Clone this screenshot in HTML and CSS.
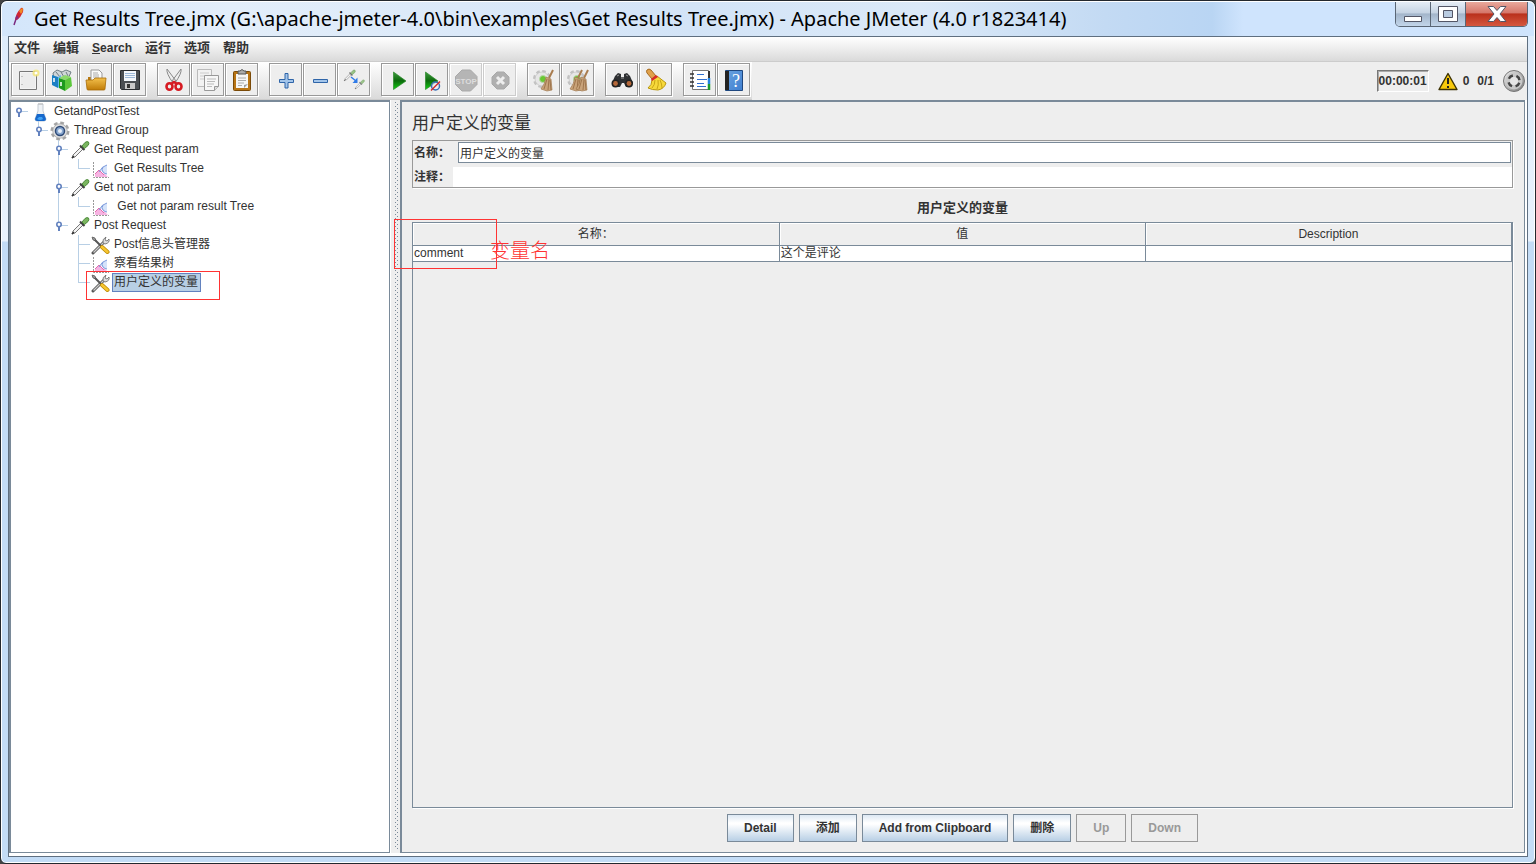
FILE: index.html
```html
<!DOCTYPE html>
<html lang="zh-CN">
<head>
	<meta charset="utf-8">
	<title>Apache JMeter (4.0 r1823414)</title>
	<link rel="stylesheet" href="styles.css">
</head>
<body>
<svg class="defs" aria-hidden="true">
	<defs>
		<linearGradient id="green" x1="0" y1="0" x2="0" y2="1"><stop offset="0" stop-color="#3f9a3f"/><stop offset=".5" stop-color="#0b6a0b"/><stop offset="1" stop-color="#12d012"/></linearGradient>
		<linearGradient id="gold" x1="0" y1="0" x2="0" y2="1"><stop offset="0" stop-color="#f3c04c"/><stop offset="1" stop-color="#c07c08"/></linearGradient>
		<linearGradient id="metal" x1="0" y1="0" x2="1" y2="1"><stop offset="0" stop-color="#f2f2f2"/><stop offset="1" stop-color="#777"/></linearGradient>
		<linearGradient id="book" x1="0" y1="0" x2="1" y2="1"><stop offset="0" stop-color="#6aa3e0"/><stop offset="1" stop-color="#3f7fd0"/></linearGradient>
	</defs>
	<symbol id="dropper" viewBox="0 0 20 20">
		<path d="M2 18l1-3 8-8 2 2-8 8z" fill="#f2f2f2" stroke="#777"/>
		<path d="M2 18l2-2" stroke="#333" stroke-width="1.500"/>
		<path d="M10 5.500l4.500 4.500" stroke="#444" stroke-width="2"/>
		<path d="M12 6l3-3.500q2-1.500 3.500-.5 1 2-.5 3.500l-3.500 3z" fill="#7ab55f" stroke="#4c8a3a"/>
	</symbol>
	<symbol id="chart" viewBox="0 0 20 20">
		<path d="M3.500 3v15.500H19" fill="none" stroke="#999" stroke-dasharray="2 1"/>
		<path d="M5 18v-3l4-4 3 3 3 1 3 3z" fill="#f7b3e2"/>
		<path d="M5 15l4-4 3 3 2 2" fill="none" stroke="#df6cae"/>
		<path d="M11 11q2-4 6-5v9q-4 0-6-4z" fill="#d5e3fa"/>
		<path d="M9 13q3-6 8-7M13 8q-2 3 0 5t4 2" fill="none" stroke="#7d9bdc"/>
	</symbol>
	<symbol id="tools" viewBox="0 0 20 20">
		<path d="M3 18L14 7" stroke="#555" stroke-width="3" stroke-linecap="round"/>
		<path d="M3.500 17.500L14 7" stroke="#ccc" stroke-width="1.200"/>
		<path d="M13 8q-1-4 3-6l-1 3 2 1 2-2q1 4-4 5z" fill="#ddd" stroke="#666" stroke-width=".8"/>
		<path d="M3 3l8 8" stroke="#555" stroke-width="2"/>
		<path d="M2 2l3 1 1 3-3-1z" fill="#999" stroke="#444" stroke-width=".6"/>
		<path d="M12 12l5.500 5" stroke="#b88600" stroke-width="4" stroke-linecap="round"/>
		<path d="M12 12l5.500 5" stroke="#f7c630" stroke-width="2.500" stroke-linecap="round"/>
	</symbol>
	<symbol id="flask" viewBox="0 0 20 20">
		<path d="M8 2v7l-3 8q0 2 2 2h7q2 0 2-2l-3-8V2z" fill="#eef2f6" stroke="#c2cad3"/>
		<path d="M7 12h7l2 5q0 2-2 2H7q-2 0-2-2z" fill="#1668cc"/>
		<path d="M7 17q3 2 6 0l-1-2H9z" fill="#3fa2f5"/>
		<path d="M8 2h5" stroke="#bbb"/>
	</symbol>
	<symbol id="gear" viewBox="0 0 20 20">
		<circle cx="10" cy="10" r="8" fill="none" stroke="#a5a5a5" stroke-width="3" stroke-dasharray="3.600 2.683"/>
		<circle cx="10" cy="10" r="7.300" fill="#ddd" stroke="#999" stroke-width=".6"/>
		<circle cx="10" cy="10" r="4.500" fill="#88a7cf" stroke="#2e4a77" stroke-width="1.500"/>
		<circle cx="10" cy="10" r="2" fill="#e9f0fa"/>
	</symbol>
	<symbol id="open" viewBox="0 0 19 19">
		<path d="M8 9.500h9" stroke="#b8cfe5"/>
		<path d="M8 9v6" stroke="#6382bf" stroke-width="2"/>
		<circle cx="8" cy="8.500" r="2.200" fill="#fff" stroke="#6382bf" stroke-width="1.600"/>
	</symbol>
	<symbol id="broom" viewBox="0 0 24 24">
		<path d="M21 2l-4 8" stroke="#a97c4e" stroke-width="2"/>
		<path d="M14 9l5 2 1 11-5 1-6-2q4-5 5-12z" fill="#c9a37a" stroke="#a17a52" stroke-width=".7"/>
		<path d="M15 11l-3 10M17 11l-1 11M18 12l1 10" stroke="#8c6239" stroke-width=".7"/>
	</symbol>
	<symbol id="cog" viewBox="0 0 24 24">
		<circle cx="10" cy="11" r="7.500" fill="none" stroke="#c2c2c2" stroke-width="3" stroke-dasharray="3.500 2.390"/>
		<circle cx="10" cy="11" r="7" fill="#e6e6e6" stroke="#bdbdbd" stroke-width=".6"/>
		<circle cx="11" cy="11" r="3.500" fill="#68c832" stroke="#b9d6aa"/>
	</symbol>
</svg>

<div class="window">
	<header class="titlebar">
		<svg class="feather" viewBox="0 0 14 20"><path d="M2 18l2-6" stroke="#7a2a80" stroke-width="1.500"/><path d="M3 13Q4 6 9 1q3-1 2 4-2 5-6 8z" fill="#d22630"/><path d="M7 4q2-3 4-3 0 4-2 6z" fill="#f08a25"/><path d="M3 13q0-3 2-5l2 3q-2 2-4 2z" fill="#8e2a78"/></svg>
		<h1>Get Results Tree.jmx (G:\apache-jmeter-4.0\bin\examples\Get Results Tree.jmx) - Apache JMeter (4.0 r1823414)</h1>
		<div class="winbtns">
			<button class="min" aria-label="Minimize"><svg viewBox="0 0 18 6"><path d="M.5.5h17v5H.5z" fill="#fff" stroke="#535666"/></svg></button>
			<button class="max" aria-label="Maximize"><svg viewBox="0 0 20 16"><path d="M.5.5h19v15H.5z" fill="#fff" stroke="#535666"/><path d="M5.500 4.500h9v7h-9z" fill="#b9cbe0" stroke="#535666"/></svg></button>
			<button class="close" aria-label="Close"><svg viewBox="0 0 20 16"><path d="M1 .5h5.500L10 4.500l3.500-4H19L13 8l6 7.500h-5.500L10 11.500l-3.500 4H1L7 8z" fill="#fff" stroke="#535666"/></svg></button>
		</div>
	</header>

	<div class="client">
		<nav class="menubar">
			<button>文件</button>
			<button>编辑</button>
			<button class="latin"><u>S</u>earch</button>
			<button>运行</button>
			<button>选项</button>
			<button>帮助</button>
		</nav>

		<div class="toolbar">
			<div class="tools">
				<div class="group">
					<button aria-label="New"><svg viewBox="0 0 24 24"><path d="M3.500 3.500h17v18h-17z" fill="#f4f4f4" stroke="#777"/><path d="M5 5h14v15H5z" fill="#ececec"/><path d="M6 8v1M6 16v1" stroke="#999"/><circle cx="20" cy="5" r="3.500" fill="#f5e673" opacity=".8"/><circle cx="20" cy="5" r="1.500" fill="#fff"/></svg></button>
					<button aria-label="Templates"><svg viewBox="0 0 24 24"><path d="M3 5l4-3 5 2 4-2 5 2-3 7H4z" fill="#cfd6d9" stroke="#6f7d84"/><path d="M6 4l4 5M11 4l3 5M16 4l2 4" stroke="#6f7d84"/><path d="M2 7l6 2v11l-6-3z" fill="#1b7fc4"/><path d="M8 9l3-2v11l-3 2z" fill="#65b6e8"/><path d="M9 10l6 2v11l-6-3z" fill="#1d9a1d"/><path d="M15 12l6-3 1 9-7 5z" fill="#5cc73b"/><path d="M9 10l6-3 6 2-6 3z" fill="#8bd96b"/><path d="M4 10v4M11 14v4" stroke="#fff" stroke-width="1.500"/></svg></button>
					<button aria-label="Open"><svg viewBox="0 0 24 24"><path d="M4 9h4l2 2h11v10H4z" fill="#b97a12"/><path d="M7 2h8l3 3v9H7z" fill="#fafafa" stroke="#999"/><path d="M9 5h5M9 7h6M9 9h6" stroke="#aaa"/><path d="M2 12h7l2-2h11l-1 11q0 1-1 1H4q-1 0-1-1z" fill="url(#gold)" stroke="#a76b06" stroke-width=".8"/></svg></button>
					<button aria-label="Save"><svg viewBox="0 0 24 24"><path d="M2.500 2.500h19v19h-18l-1-1z" fill="#4a4e52" stroke="#2a2d30"/><path d="M6 3h12v10H6z" fill="#f3f7fb"/><path d="M7 5.500h10M7 7.500h10M7 9.500h10" stroke="#9db9d8"/><path d="M7 15h10v6H7z" fill="#c8c8c8"/><path d="M9 16h3v4H9z" fill="#333"/></svg></button>
				</div>
				<div class="group">
					<button aria-label="Cut"><svg viewBox="0 0 24 24"><path d="M5 1q-1 4 6 14l3-2Q8 5 5 1zM19 1q1 4-6 14l-3-2Q16 5 19 1z" fill="#eee" stroke="#888"/><ellipse cx="7.500" cy="18.500" rx="3" ry="3.300" fill="none" stroke="#d61a22" stroke-width="2.600"/><ellipse cx="16.500" cy="18.500" rx="3" ry="3.300" fill="none" stroke="#d61a22" stroke-width="2.600"/><path d="M9 16l3-2 3 2" fill="none" stroke="#d61a22" stroke-width="2.500"/></svg></button>
					<button aria-label="Copy"><svg viewBox="0 0 24 24"><path d="M1.500 1.500h14v17h-14z" fill="#f2f2f2" stroke="#bbb"/><path d="M4 5h9M4 8h5M4 11h4" stroke="#ccc"/><path d="M8.500 7.500h14v11l-4 4h-10z" fill="#f7f7f7" stroke="#999"/><path d="M18.500 22.500v-4h4" fill="#ddd" stroke="#999"/><path d="M11 11h9M11 13.500h8M11 16h7M11 18.500h5" stroke="#bbb"/></svg></button>
					<button aria-label="Paste"><svg viewBox="0 0 24 24"><rect x="3.500" y="3.500" width="17" height="19" rx="1" fill="#b87414" stroke="#7a4a08"/><path d="M6 6h12v14H6z" fill="#f5f5f5"/><path d="M8 5V3h2q2-3 4 0h2v3H8z" fill="#aaa" stroke="#555"/><path d="M8 10h8M8 12.500h8M8 15h6M8 17.500h4" stroke="#aaa"/><path d="M14 20v-3l4-1z" fill="#999"/></svg></button>
				</div>
				<div class="group">
					<button aria-label="Expand All"><svg viewBox="0 0 24 24"><path d="M11 5.500h3v6h5.500v3H14v5.500h-3v-5.500H5.500v-3H11z" fill="#a3c5ea" stroke="#2f65a8"/></svg></button>
					<button aria-label="Collapse All"><svg viewBox="0 0 24 24"><path d="M5.500 11.500h14v3h-14z" fill="#a3c5ea" stroke="#2f65a8"/></svg></button>
					<button aria-label="Toggle"><svg viewBox="0 0 24 24"><use href="#dropper" x="1" y="1" width="13" height="13" opacity=".75"/><use href="#dropper" x="12" y="11" width="11" height="11" opacity=".7"/><path d="M9 9l5 4" stroke="#2f7be8" stroke-width="1.500"/><path d="M15.500 9.500v5.500h-5z" fill="#2f7be8"/></svg></button>
				</div>
				<div class="group">
					<button aria-label="Start"><svg viewBox="0 0 24 24"><path d="M7.500 4v17.500L20 13z" fill="url(#green)" stroke="#2a8a2a" stroke-width=".7"/></svg></button>
					<button aria-label="Start no pauses"><svg viewBox="0 0 24 24"><path d="M5.500 4v17.500L18 13z" fill="url(#green)" stroke="#2a8a2a" stroke-width=".7"/><circle cx="15.500" cy="18" r="4" fill="#e6eefa" fill-opacity=".7" stroke="#3b6fb5" stroke-width="1.500"/><path d="M11 22.500l9-9" stroke="#d42a2a" stroke-width="1.500"/></svg></button>
					<button aria-label="Stop" disabled><svg viewBox="0 0 24 24"><path d="M8 2h8.500L23 8.500v8L16.500 23H8l-6.500-6.500v-8z" fill="#b5b5b5" stroke="#a9a9a9"/><text x="12" y="16" class="stoptext">STOP</text></svg></button>
					<button aria-label="Shutdown" disabled><svg viewBox="0 0 24 24"><path d="M9 4h7l5 5v7l-5 5H9l-5-5V9z" fill="#b0b0b0" stroke="#a9a9a9"/><path d="M9 9l7 7M16 9l-7 7" stroke="#eee" stroke-width="3"/></svg></button>
				</div>
				<div class="group">
					<button aria-label="Clear"><svg viewBox="0 0 24 24"><use href="#cog"/><use href="#broom"/></svg></button>
					<button aria-label="Clear All"><svg viewBox="0 0 24 24"><use href="#cog"/><use href="#broom" x="-5"/><use href="#broom" x="1"/></svg></button>
				</div>
				<div class="group">
					<button aria-label="Search"><svg viewBox="0 0 24 24"><path d="M5 8l3-3 3 1v3h3V6l3-1 3 3 3 7-3 4h-4l-2-4h-2l-2 4H5l-3-4z" fill="#2e3033"/><circle cx="5.500" cy="15.500" r="4" fill="#222"/><circle cx="19" cy="15.500" r="4" fill="#222"/><circle cx="5.500" cy="15.500" r="2.400" fill="#b5683a"/><circle cx="19" cy="15.500" r="2.400" fill="#b5683a"/><path d="M7 8l2-1M16 7l2 1M11 10h3" stroke="#999"/></svg></button>
					<button aria-label="Reset Search"><svg viewBox="0 0 24 24"><path d="M3 2q2-2 4 0l5 6-4 3-5-6q-1-2 0-3z" fill="#e0a14b" stroke="#a76b1f"/><path d="M13 8l9 7q-2 6-8 7-6 0-10-2 4-3 4-8z" fill="#f7d93b" stroke="#b8960f"/><path d="M11 12q0 5-3 8M14 12q1 5-1 9M16 12q2 4 2 8" stroke="#c9a516" fill="none"/><path d="M7 11l5-4 2 2-6 4z" fill="#d62a2a"/></svg></button>
				</div>
				<div class="group">
					<button aria-label="Function Helper"><svg viewBox="0 0 24 24"><path d="M4.500 2.500h16v19h-16z" fill="#fff" stroke="#777"/><path d="M21 3v7" stroke="#333" stroke-width="2"/><path d="M21 10v6" stroke="#2585e0" stroke-width="2.500"/><path d="M21 16v6" stroke="#1d9a2d" stroke-width="2.500"/><path d="M2 6h4M2 10h4M2 14h4M2 18h4" stroke="#333" stroke-width="1.500"/><path d="M9 6.500h7M9 11.500h10M9 15.500h7M9 18.500h9" stroke="#2f6fd0" stroke-width="1.200"/></svg></button>
					<button aria-label="Help"><svg viewBox="0 0 24 24"><path d="M3.500 2.500h17v20h-17z" fill="url(#book)" stroke="#1e477f"/><path d="M3 3h4v19H3z" fill="#222"/><text x="14" y="19" class="qmark">?</text></svg></button>
				</div>
			</div>
			<div class="status">
				<output class="timer">00:00:01</output>
				<svg class="warn" viewBox="0 0 20 19"><path d="M10 1.500L19 17.500H1z" fill="#f7c90c" stroke="#3c3203" stroke-width="1.400" stroke-linejoin="round"/><path d="M10 6v6M10 14v2" stroke="#222" stroke-width="2"/></svg>
				<span class="errors">0</span>
				<span class="threads">0/1</span>
				<svg class="light" viewBox="0 0 24 24"><circle cx="12" cy="12" r="10.500" fill="url(#metal)" stroke="#777"/><circle cx="12" cy="12" r="8.500" fill="#c9c9c9"/><circle cx="12" cy="12" r="5.500" fill="none" stroke="#444" stroke-width="2.600" stroke-dasharray="5 3.640" stroke-dashoffset="-1.800"/><circle cx="12" cy="12" r="4" fill="#e5e5e5"/></svg>
			</div>
		</div>

		<div class="split">
			<aside class="treepane">
				<ul class="tree">
					<li>
						<div class="row"><svg class="handle"><use href="#open"/></svg><svg class="node"><use href="#flask"/></svg><span>GetandPostTest</span></div>
						<ul>
							<li>
								<div class="row"><svg class="handle"><use href="#open"/></svg><svg class="node"><use href="#gear"/></svg><span>Thread Group</span></div>
								<ul>
									<li>
										<div class="row"><svg class="handle"><use href="#open"/></svg><svg class="node"><use href="#dropper"/></svg><span>Get Request param</span></div>
										<ul>
											<li><div class="row leaf"><svg class="node"><use href="#chart"/></svg><span>Get Results Tree</span></div></li>
										</ul>
									</li>
									<li>
										<div class="row"><svg class="handle"><use href="#open"/></svg><svg class="node"><use href="#dropper"/></svg><span>Get not param</span></div>
										<ul>
											<li><div class="row leaf"><svg class="node"><use href="#chart"/></svg><span>&nbsp;Get not param result Tree</span></div></li>
										</ul>
									</li>
									<li>
										<div class="row"><svg class="handle"><use href="#open"/></svg><svg class="node"><use href="#dropper"/></svg><span>Post Request</span></div>
										<ul>
											<li><div class="row leaf"><svg class="node"><use href="#tools"/></svg><span>Post信息头管理器</span></div></li>
											<li><div class="row leaf"><svg class="node"><use href="#chart"/></svg><span>察看结果树</span></div></li>
											<li><div class="row leaf"><svg class="node"><use href="#tools"/></svg><span class="selected">用户定义的变量</span><i class="mark mark-node"></i></div></li>
										</ul>
									</li>
								</ul>
							</li>
						</ul>
					</li>
				</ul>
			</aside>
			<div class="divider"></div>
			<main class="panel">
				<h2>用户定义的变量</h2>
				<div class="fields">
					<div class="field"><label for="name">名称：</label><input id="name" type="text" value="用户定义的变量"></div>
					<div class="field"><label for="comments">注释：</label><input id="comments" class="plain" type="text"></div>
				</div>
				<h3 id="vars">用户定义的变量</h3>
				<div class="tablebox">
					<table aria-labelledby="vars">
						<thead>
							<tr><th>名称：</th><th>值</th><th>Description</th></tr>
						</thead>
						<tbody>
							<tr><td>comment</td><td>这个是评论</td><td></td></tr>
						</tbody>
					</table>
					<i class="mark mark-var"></i>
					<span class="note">变量名</span>
				</div>
				<div class="actions">
					<button>Detail</button>
					<button>添加</button>
					<button>Add from Clipboard</button>
					<button>删除</button>
					<button disabled>Up</button>
					<button disabled>Down</button>
				</div>
			</main>
		</div>
	</div>
</div>
</body>
</html>
```

FILE: styles.css
```css
* {
	box-sizing: border-box;
}

body {
	margin: 0;
	background: #444;
	color: #333;
	font: 12px/16px "Liberation Sans", "Noto Sans CJK SC", sans-serif;
}

button, input {
	font: inherit;
	color: inherit;
	margin: 0;
	padding: 0;
}

.defs {
	position: absolute;
	width: 0;
	height: 0;
}

.window {
	display: flex;
	flex-direction: column;
	height: 100vh;
	padding: 0 7px 6px;
	border: 1px solid #23282e;
	border-radius: 7px 7px 6px 6px;
	background: linear-gradient(#dcebfb 0, #e9f2fc 240px, #c3dcf6 241px, #c3dcf6);
	box-shadow: inset 0 0 0 1px #fff;
}

.titlebar {
	display: flex;
	align-items: center;
	height: 35px;
	flex: none;
	margin: 0 -6px;
	padding-left: 10px;
	border-top: 1px solid #fff;
	border-radius: 6px 6px 0 0;
	background: linear-gradient(90deg, #d3e6fb, #e3eefa 15%, #dbe9f9 30%, #d3e4f7 45%, #dbe9f8 60%, #c3daf3 72%, #b9d5f3 79%, #cfe4fd 81%, #cfe4fd);
}

.feather {
	width: 14px;
	height: 20px;
	margin: 0 8px 4px 0;
}

h1 {
	flex: 1;
	margin: 0;
	font: 20px/30px "Noto Sans", sans-serif;
	color: #000;
	white-space: nowrap;
}

.winbtns {
	display: flex;
	align-self: flex-start;
	height: 25px;
	margin-right: 6px;
	border: 1px solid #5a6675;
	border-top: 0;
	border-radius: 0 0 5px 5px;
	overflow: hidden;
}

.winbtns button {
	display: flex;
	align-items: center;
	justify-content: center;
	width: 35px;
	border: 0;
	border-right: 1px solid #5a6675;
	background: linear-gradient(#e5edf6, #c5d3e3 45%, #a3b5ca 50%, #c2d5ea);
}

.winbtns svg {
	width: 20px;
	height: 16px;
}

.winbtns .min svg {
	width: 18px;
	height: 6px;
	margin-top: 10px;
}

.winbtns .close {
	width: 61px;
	border-right: 0;
	background: linear-gradient(#e9a99c, #d5766a 45%, #b9301c 50%, #d5573f);
}

.client {
	flex: 1;
	display: flex;
	flex-direction: column;
	min-height: 0;
	border: 1px solid #5f6f80;
	background: #eee;
}

.menubar {
	display: flex;
	gap: 13px;
	height: 25px;
	flex: none;
	padding: 0 5px 2px;
	border-bottom: 1px solid #ccc;
	background: linear-gradient(#fff, #dadada);
}

.menubar button {
	border: 0;
	background: none;
	font-size: 13px;
	font-weight: bold;
}

.menubar .latin {
	font-size: 12px;
}

.toolbar {
	display: flex;
	flex: none;
	height: 38px;
}

.tools {
	display: flex;
	gap: 11px;
	padding: 1px 2px 0;
	border-bottom: 1px solid #ccc;
	background: linear-gradient(#fff, #dadada);
}

.group {
	display: flex;
	gap: 1px;
}

.group button {
	display: flex;
	align-items: center;
	justify-content: center;
	width: 33px;
	height: 33px;
	border: 1px solid #999;
	background: #eee;
	box-shadow: 1px 1px #fff, inset 1px 1px #fff;
}

.group button:disabled {
	border-color: #ccc;
}

.group svg {
	width: 24px;
	height: 24px;
}

.stoptext {
	font: bold 8px "Liberation Sans", sans-serif;
	fill: #ddd;
	text-anchor: middle;
}

.qmark {
	font: 18px "Liberation Serif", serif;
	fill: #fff;
	text-anchor: middle;
}

.status {
	display: flex;
	align-items: center;
	margin-left: auto;
	padding-right: 1px;
	font-weight: bold;
}

.timer {
	width: 52px;
	height: 22px;
	line-height: 20px;
	border: 1px solid;
	border-color: #777 #fff #fff #777;
	box-shadow: inset 1px 1px #aaa;
	text-align: center;
}

.warn {
	width: 20px;
	height: 19px;
	margin: 0 5px 0 9px;
}

.threads {
	margin: 0 8px;
}

.light {
	width: 24px;
	height: 24px;
}

.split {
	flex: 1;
	display: flex;
	min-height: 0;
	padding: 0 2px 3px 0;
	background: #fff;
}

.treepane {
	flex: 0 0 381px;
	border: 1px solid #7a8a99;
	border-width: 2px 1px 1px 2px;
	background: #fff;
}

.tree, .tree ul {
	margin: 0;
	padding: 0;
	list-style: none;
}

.tree ul {
	padding-left: 20px;
}

.tree li {
	position: relative;
}

.tree ul li::before {
	content: "";
	position: absolute;
	left: 7px;
	top: 0;
	height: 100%;
	border-left: 1px solid #b8cfe5;
}

.tree ul li:last-child::before {
	height: 10px;
}

.row {
	position: relative;
	display: flex;
	align-items: center;
	height: 19px;
}

.row span {
	margin-left: 2px;
	padding: 0 2px 0 1px;
	border: 1px solid transparent;
	line-height: 17px;
	white-space: nowrap;
}

.row .selected {
	border-color: #6382bf;
	background: #b8cfe5;
}

.handle {
	width: 19px;
	height: 19px;
}

.leaf::before {
	content: "";
	width: 11px;
	margin-left: 8px;
	border-top: 1px solid #b8cfe5;
}

.node {
	position: relative;
	flex: none;
	width: 20px;
	height: 20px;
}

/* two staggered columns of grip dots */
.divider {
	flex: 0 0 9px;
	margin-left: 1px;
	border: 0 solid #eee;
	border-width: 2px 2px 3px 3px;
	background:
		conic-gradient(from 270deg at 1px 1px, #7a8a99 90deg, transparent 0) 1px 0 / 4px 4px,
		conic-gradient(from 270deg at 1px 1px, #7a8a99 90deg, transparent 0) 3px 2px / 4px 4px,
		#eee;
}

.panel {
	flex: 1;
	display: flex;
	flex-direction: column;
	min-width: 0;
	padding: 11px 11px 10px 10px;
	border: 1px solid #7a8a99;
	border-width: 2px 1px 1px 2px;
	background: #eee;
}

h2 {
	margin: 0 0 5px;
	font-size: 17px;
	line-height: 22px;
	font-weight: normal;
}

.fields {
	border: 1px solid #999;
	box-shadow: 1px 1px #fff;
	padding-top: 1px;
}

.field {
	display: flex;
	align-items: center;
	height: 21px;
	padding: 0 1px;
}

.field + .field {
	height: 20px;
	margin-top: 4px;
	padding-right: 0;
}

.field label {
	font-weight: bold;
	width: 44px;
	white-space: nowrap;
}

.field input {
	flex: 1;
	height: 100%;
	border: 1px solid #7a8a99;
	padding: 0 1px;
	background: #fff;
}

.field .plain {
	margin-left: -5px;
	border: 0;
}

h3 {
	margin: 12px 0 6px;
	font-size: 13px;
	line-height: 16px;
	text-align: center;
}

.tablebox {
	position: relative;
	flex: 1;
	border: 1px solid #7a8a99;
	box-shadow: 1px 1px #fff;
}

table {
	width: 100%;
	border-collapse: collapse;
	table-layout: fixed;
}

th, td {
	border: 1px solid #7a8a99;
	border-width: 0 1px 1px 0;
	padding: 0 1px;
	white-space: nowrap;
}

th {
	height: 22px;
	font-weight: normal;
	box-shadow: inset 1px 1px #fff;
}

td {
	height: 16px;
	line-height: 15px;
	background: #fff;
}

.mark {
	position: absolute;
	border: 1px solid #f33;
}

.mark-node {
	left: 15px;
	top: -2px;
	width: 134px;
	height: 29px;
}

.mark-var {
	left: -19px;
	top: -4px;
	width: 103px;
	height: 50px;
}

.note {
	position: absolute;
	left: 77px;
	top: 16px;
	font-size: 20px;
	line-height: 24px;
	font-weight: 300;
	color: #f33;
}

.actions {
	display: flex;
	justify-content: center;
	gap: 5px;
	margin-top: 6px;
}

.actions button {
	height: 28px;
	padding: 0 16px;
	border: 1px solid #7a8a99;
	background: linear-gradient(#dde8f3, #fff 30%, #fff 35%, #b8cfe5);
	font-weight: bold;
}

.actions button:disabled {
	border-color: #999;
	background: #eee;
	color: #999;
}
```
